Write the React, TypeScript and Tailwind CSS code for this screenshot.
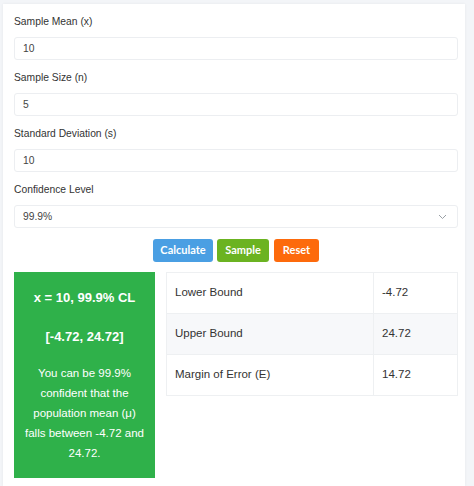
import React from "react";

const sans = { fontFamily: '"Liberation Sans", Arial, sans-serif' };

function Field({ label, value }: { label: string; value: string }) {
  return (
    <div className="mb-[11px]">
      <div className="text-[10.3px] leading-[14px] text-[#333] mb-[8px]">{label}</div>
      <div className="h-[23px] border border-[#eceef1] rounded-[3px] bg-white flex items-center pl-[8px] text-[10.3px] text-[#444]">
        {value}
      </div>
    </div>
  );
}

export default function App() {
  return (
    <div className="min-h-[486px] bg-[#f3f5f8] pl-[3px] pt-[4px] pr-[9px]" style={sans}>
      <div className="bg-white min-h-[482px] shadow-[0_0_3px_rgba(0,0,0,0.06)] pl-[11px] pr-[7px] pt-[11px] pb-[8px]">
        <Field label="Sample Mean (x)" value="10" />
        <Field label="Sample Size (n)" value="5" />
        <Field label="Standard Deviation (s)" value="10" />
        <div className="mb-[11px]">
          <div className="text-[10.3px] leading-[14px] text-[#333] mb-[8px]">Confidence Level</div>
          <div className="h-[23px] border border-[#eceef1] rounded-[3px] bg-white flex items-center justify-between pl-[8px] pr-[10px] text-[10.3px] text-[#444]">
            <span>99.9%</span>
            <svg width="9" height="6" viewBox="0 0 9 6" fill="none">
              <path d="M1 1l3.5 3.5L8 1" stroke="#9aa0a6" strokeWidth="1" />
            </svg>
          </div>
        </div>
        <div className="flex justify-center gap-[4px] mb-[10px]" style={{ fontFamily: 'Lato, "Open Sans", sans-serif' }}>
          <button className="h-[23px] w-[60px] rounded-[3px] bg-[#4a9fe3] text-white text-[11px] font-bold">Calculate</button>
          <button className="h-[23px] w-[52px] rounded-[3px] bg-[#6bb321] text-white text-[11px] font-bold">Sample</button>
          <button className="h-[23px] w-[45px] ml-[1px] rounded-[3px] bg-[#fd6a0c] text-white text-[11px] font-bold">Reset</button>
        </div>
        <div className="flex gap-[11px] items-start">
          <div className="w-[141px] bg-[#2fb14a] text-white text-center pt-[16px] pb-[15px] px-[10px]">
            <div className="text-[13px] leading-[20px] font-bold">x = 10, 99.9% CL</div>
            <div className="text-[13px] leading-[20px] font-bold mt-[19px]">[-4.72, 24.72]</div>
            <div className="text-[11.5px] leading-[20px] mt-[16px]">
              You can be 99.9% confident that the population mean (μ) falls between -4.72 and 24.72.
            </div>
          </div>
          <div className="flex-1 border border-[#eef0f2] text-[11.5px] text-[#333]">
            <div className="flex h-[40px] items-center">
              <div className="w-[207px] pl-[8px] h-full flex items-center border-r border-[#eef0f2]">Lower Bound</div>
              <div className="pl-[8px]">-4.72</div>
            </div>
            <div className="flex h-[41px] items-center bg-[#f7f8fa] border-t border-[#eef0f2]">
              <div className="w-[207px] pl-[8px] h-full flex items-center border-r border-[#eef0f2]">Upper Bound</div>
              <div className="pl-[8px]">24.72</div>
            </div>
            <div className="flex h-[41px] items-center border-t border-[#eef0f2]">
              <div className="w-[207px] pl-[8px] h-full flex items-center border-r border-[#eef0f2]">Margin of Error (E)</div>
              <div className="pl-[8px]">14.72</div>
            </div>
          </div>
        </div>
      </div>
    </div>
  );
}
